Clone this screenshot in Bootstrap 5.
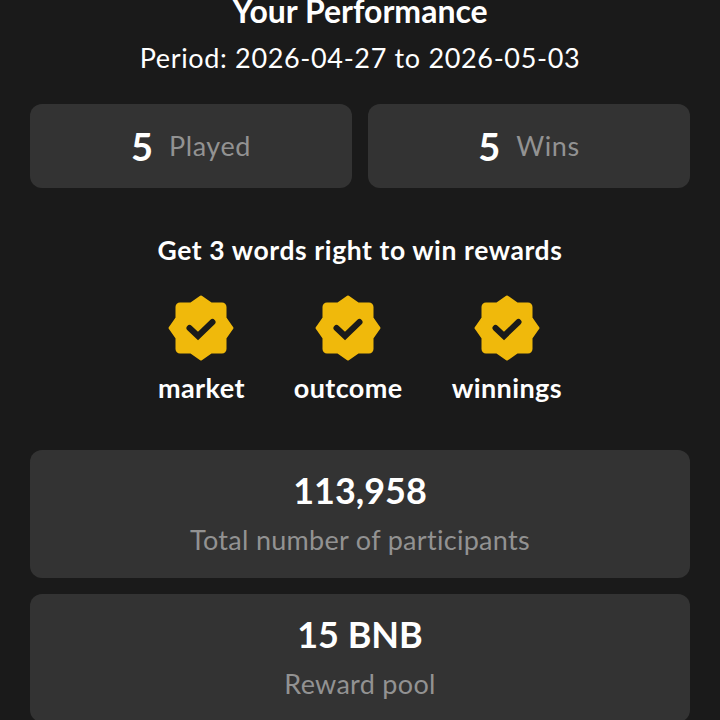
<!DOCTYPE html>
<html lang="en">
<head>
<meta charset="UTF-8">
<title>Your Performance</title>
<link rel="stylesheet" href="https://cdn.jsdelivr.net/npm/bootstrap@5.3.0/dist/css/bootstrap.min.css">
<script src="https://cdn.jsdelivr.net/npm/bootstrap@5.3.0/dist/js/bootstrap.bundle.min.js"></script>
<style>
  html, body { height: 720px; overflow: hidden; }
  body { background: #1a1a1a; color: #fff; font-family: "Lato", "Liberation Sans", sans-serif; }
  .page-wrap { padding: 0 30px; }
  .page-title { font-size: 32px; line-height: 22px; font-weight: 700; margin: 0; }
  .page-period { font-size: 27px; line-height: 36px; margin-top: 18px; letter-spacing: .66px; }
  .stat-tile { background: #333; border-radius: 12px; height: 84px; margin-top: 28px; }
  .stat-num { font-size: 38px; font-weight: 700; }
  .stat-label { font-size: 27px; color: #929292; letter-spacing: .6px; }
  .rule-text { font-size: 26.5px; font-weight: 700; line-height: 36px; margin-top: 44px; letter-spacing: .6px; }
  .word-row { gap: 49px; margin-top: 27px; }
  .word-item { font-size: 27px; font-weight: 700; line-height: 36px; letter-spacing: .4px; }
  .word-item svg { display: block; margin: 0 auto 9px; }
  .info-tile { background: #333; border-radius: 12px; height: 128px; }
  .info-top { margin-top: 44px; }
  .info-num { font-size: 36px; font-weight: 700; line-height: 40px; }
  .info-label { font-size: 27px; color: #929292; line-height: 36px; margin-top: 12px; letter-spacing: .3px; }
</style>
</head>
<body>
<svg width="0" height="0" class="position-absolute">
  <symbol id="badge" viewBox="0 0 66 66">
    <path d="M33 2 L43 9 H54 A3 3 0 0 1 57 12 V23 L64 33 L57 43 V54 A3 3 0 0 1 54 57 H43 L33 64 L23 57 H12 A3 3 0 0 1 9 54 V43 L2 33 L9 23 V12 A3 3 0 0 1 12 9 H23 Z" fill="#f0b90b" stroke="#f0b90b" stroke-width="3" stroke-linejoin="round"/>
    <path d="M21.5 33 L30 41 L44.5 27" fill="none" stroke="#1a1a1a" stroke-width="6" stroke-linecap="round" stroke-linejoin="miter"/>
  </symbol>
</svg>
<div class="page-wrap text-center">
  <h1 class="page-title">Your Performance</h1>
  <div class="page-period">Period: 2026-04-27 to 2026-05-03</div>

  <div class="d-flex gap-3">
    <div class="stat-tile w-50 d-flex align-items-center justify-content-center gap-3">
      <span class="stat-num">5</span><span class="stat-label">Played</span>
    </div>
    <div class="stat-tile w-50 d-flex align-items-center justify-content-center gap-3">
      <span class="stat-num">5</span><span class="stat-label">Wins</span>
    </div>
  </div>

  <div class="rule-text">Get 3 words right to win rewards</div>
  <div class="word-row d-flex justify-content-center">
    <div class="word-item"><svg width="66" height="66"><use href="#badge"/></svg>market</div>
    <div class="word-item"><svg width="66" height="66"><use href="#badge"/></svg>outcome</div>
    <div class="word-item"><svg width="66" height="66"><use href="#badge"/></svg>winnings</div>
  </div>

  <div class="info-tile info-top d-flex flex-column align-items-center justify-content-center">
    <div class="info-num">113,958</div>
    <div class="info-label">Total number of participants</div>
  </div>
  <div class="info-tile mt-3 d-flex flex-column align-items-center justify-content-center">
    <div class="info-num">15 BNB</div>
    <div class="info-label">Reward pool</div>
  </div>
</div>
</body>
</html>
